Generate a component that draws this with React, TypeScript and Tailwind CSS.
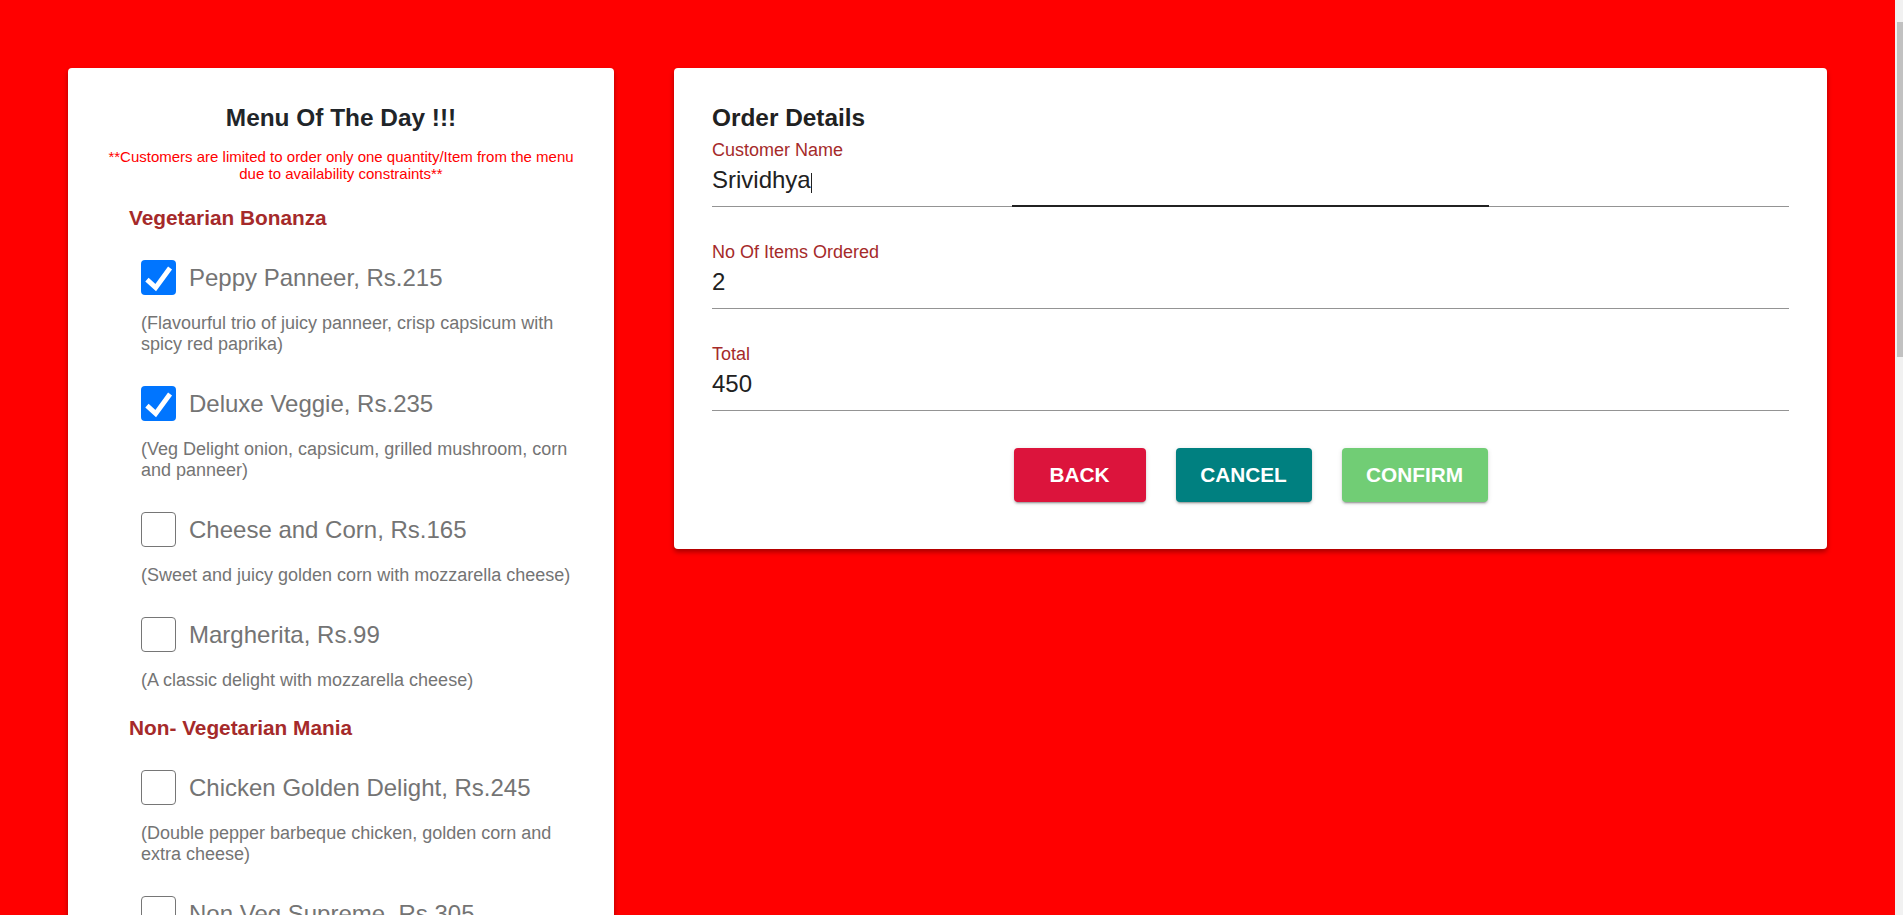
const font = "font-['Liberation_Sans',Arial,sans-serif]";

type Item = { name: string; price: number; desc: string; checked?: boolean };

const vegItems: Item[] = [
  { name: 'Peppy Panneer', price: 215, desc: '(Flavourful trio of juicy panneer, crisp capsicum with spicy red paprika)', checked: true },
  { name: 'Deluxe Veggie', price: 235, desc: '(Veg Delight onion, capsicum, grilled mushroom, corn and panneer)', checked: true },
  { name: 'Cheese and Corn', price: 165, desc: '(Sweet and juicy golden corn with mozzarella cheese)' },
  { name: 'Margherita', price: 99, desc: '(A classic delight with mozzarella cheese)' },
];

const nonVegItems: Item[] = [
  { name: 'Chicken Golden Delight', price: 245, desc: '(Double pepper barbeque chicken, golden corn and extra cheese)' },
  { name: 'Non Veg Supreme', price: 305, desc: '(Black olives, onion, grilled mushroom, pepper barbeque chicken and chicken rashers)' },
  { name: 'Chicken Dominator', price: 315, desc: '(Loaded with double pepper barbeque chicken, peri-peri chicken and chicken tikka)' },
];

function Checkbox({ checked }: { checked?: boolean }) {
  if (checked) {
    return (
      <span className="w-[35px] h-[35px] shrink-0 rounded-[4px] bg-[#0075ff] flex items-center justify-center">
        <svg viewBox="0 0 100 100" className="w-[35px] h-[35px]">
          <path d="M17 56 L42 79 L83 23" fill="none" stroke="white" strokeWidth="14" />
        </svg>
      </span>
    );
  }
  return <span className="w-[35px] h-[35px] shrink-0 rounded-[4px] border border-[#767676] bg-white" />;
}

function MenuItem({ item }: { item: Item }) {
  return (
    <div className="pt-[31px] ml-[43px]">
      <div className="flex items-center gap-[13px]">
        <Checkbox checked={item.checked} />
        <span className="text-[24px] leading-[28px] text-[#747474]">
          {item.name}, Rs.{item.price}
        </span>
      </div>
      <p className="mt-[18px] text-[18px] leading-[21px] text-[#747474]">{item.desc}</p>
    </div>
  );
}

function Field({ label, value, focused, first }: { label: string; value: string; focused?: boolean; first?: boolean }) {
  return (
    <div className={first ? 'mt-[8px]' : 'mt-[35px]'}>
      <div className="text-[18px] leading-[21px] text-[#a52a2a]">{label}</div>
      <div className="relative pt-[5px] pb-[12px] border-b border-[#949494]">
        <div className="text-[24px] leading-[28px] text-[#212121]">
          {value}
          {focused && <span className="inline-block w-px h-[20px] bg-[#212121] align-[-5px]" />}
        </div>
        {focused && <span className="absolute left-[300px] bottom-[-1px] w-[477px] h-[2px] bg-[#212121]" />}
      </div>
    </div>
  );
}

const btnShadow = 'shadow-[0_3px_1px_-2px_rgba(0,0,0,0.2),0_2px_2px_0_rgba(0,0,0,0.14),0_1px_5px_0_rgba(0,0,0,0.12)]';

export default function App() {
  return (
    <div className={`flex h-[915px] w-full overflow-hidden ${font}`}>
      <div className="flex-1 bg-[#ff0000] overflow-hidden">
        <div className="flex items-start gap-[60px] px-[68px] pt-[68px]">
          {/* Menu card */}
          <div className="w-[546px] shrink-0 bg-white rounded-[4px] shadow-[0_3px_5px_rgba(0,0,0,0.35)] pt-[36px] px-[30px] pb-[40px]">
            <h4 className="text-center text-[24.4px] leading-[28px] font-bold text-[#212529]">Menu Of The Day !!!</h4>
            <p className="mt-[16px] text-center text-[15px] leading-[17px] text-[#ff0000]">
              **Customers are limited to order only one quantity/Item from the menu due to availability constraints**
            </p>
            <h5 className="mt-[24px] ml-[31px] text-[20.8px] leading-[23px] font-bold text-[#a52a2a]">Vegetarian Bonanza</h5>
            {vegItems.map((it) => (
              <MenuItem key={it.name} item={it} />
            ))}
            <h5 className="mt-[25px] ml-[31px] text-[20.8px] leading-[23px] font-bold text-[#a52a2a]">Non- Vegetarian Mania</h5>
            {nonVegItems.map((it) => (
              <MenuItem key={it.name} item={it} />
            ))}
          </div>

          {/* Order card */}
          <div className="flex-1 bg-white rounded-[4px] shadow-[0_3px_5px_rgba(0,0,0,0.35)] pt-[36px] px-[38px] pb-[47px]">
            <h4 className="text-[24.4px] leading-[28px] font-bold text-[#212121]">Order Details</h4>
            <Field first label="Customer Name" value="Srividhya" focused />
            <Field label="No Of Items Ordered" value="2" />
            <Field label="Total" value="450" />
            <div className="mt-[37px] flex justify-center gap-[30px]">
              <button className={`w-[132px] h-[54px] rounded-[4px] bg-[#dc143c] text-white text-[20.8px] font-bold uppercase ${btnShadow}`}>Back</button>
              <button className={`w-[136px] h-[54px] rounded-[4px] bg-[#008080] text-white text-[20.8px] font-bold uppercase ${btnShadow}`}>Cancel</button>
              <button className={`w-[146px] h-[54px] rounded-[4px] bg-[#71cd75] text-white text-[20.8px] font-bold uppercase ${btnShadow}`}>Confirm</button>
            </div>
          </div>
        </div>
      </div>
      {/* scrollbar */}
      <div className="w-[8px] shrink-0 bg-[#f1f1f1]">
        <div className="mt-[22px] ml-[2px] h-[335px] bg-[#c1c1c1]" />
      </div>
    </div>
  );
}
